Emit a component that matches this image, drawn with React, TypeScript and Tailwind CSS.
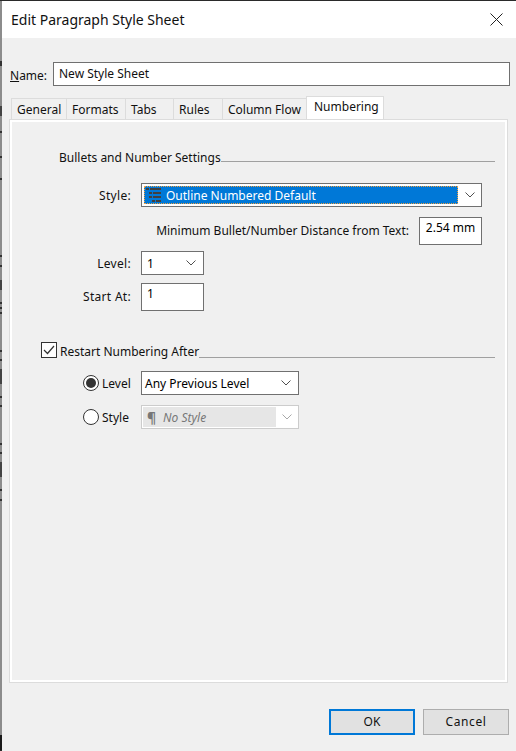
import React from 'react';

const Chevron = ({ color = '#505050' }: { color?: string }) => (
  <svg width="10" height="6" viewBox="0 0 10 6" fill="none" stroke={color} strokeWidth="1">
    <path d="M0.5 0.5 L5 5 L9.5 0.5" />
  </svg>
);

const Select = ({ width, children, disabled = false }: { width: string; children: React.ReactNode; disabled?: boolean }) => (
  <div className={`${width} h-6 flex items-center border ${disabled ? 'border-[#cccccc] bg-white text-[#6d6d6d]' : 'border-[#707070] bg-white text-black'}`}>
    {children}
  </div>
);

const tabs = [
  { label: 'General', width: 'w-[55px]' },
  { label: 'Formats', width: 'w-[59px]' },
  { label: 'Tabs', width: 'w-[48px]' },
  { label: 'Rules', width: 'w-[49px]' },
  { label: 'Column Flow', width: 'w-[84px]' },
];

// dark bits of the window behind, down the left edge: [height, colour]
const sliver: [number, string][] = [
  [60, '#8c8c8c'], [5, '#333333'], [40, '#8c8c8c'], [10, '#444444'], [15, '#8c8c8c'], [2, '#333333'], [23, '#8c8c8c'], [2, '#333333'],
  [20, '#8c8c8c'], [2, '#333333'], [75, '#8c8c8c'], [2, '#333333'], [8, '#8c8c8c'], [2, '#333333'], [13, '#8c8c8c'], [10, '#444444'],
  [12, '#8c8c8c'], [2, '#333333'], [3, '#8c8c8c'], [2, '#333333'], [3, '#8c8c8c'], [2, '#333333'], [36, '#8c8c8c'], [2, '#333333'],
  [7, '#8c8c8c'], [2, '#333333'], [8, '#8c8c8c'], [15, '#444444'], [12, '#8c8c8c'], [2, '#333333'], [7, '#8c8c8c'], [2, '#333333'],
  [36, '#8c8c8c'], [2, '#333333'], [7, '#8c8c8c'], [2, '#333333'], [8, '#8c8c8c'], [15, '#444444'], [12, '#8c8c8c'], [2, '#333333'],
  [8, '#8c8c8c'], [2, '#333333'], [234, '#8c8c8c'], [15, '#1a1a1a'],
];

export default function App() {
  return (
    <div className="w-[516px] h-[751px] bg-[#2a2a2a] pt-px flex text-[12px] text-[#111] overflow-hidden [font-family:'Noto_Sans',sans-serif]">
      <div className="w-[2px] h-full flex flex-col shrink-0">
        {sliver.map(([h, c], i) => (
          <div key={i} className="shrink-0" style={{ height: h, backgroundColor: c }} />
        ))}
      </div>

      <div className="w-[514px] h-[750px] bg-[#f0f0f0] flex flex-col">
        <div className="h-[37px] bg-white flex items-center justify-between shrink-0">
          <span className="ml-[9px] text-[14px] leading-none">Edit Paragraph Style Sheet</span>
          <svg className="mr-[13px]" width="13" height="13" viewBox="0 0 13 13" stroke="#222" strokeWidth="1" fill="none">
            <path d="M0.5 0.5 L12.5 12.5 M12.5 0.5 L0.5 12.5" />
          </svg>
        </div>

        <div className="flex items-center mt-6 ml-2 mr-[6px]">
          <span className="w-[43px] pt-1"><span className="underline">N</span>ame:</span>
          <div className="h-6 flex-1 border border-[#707070] bg-white px-[5px] flex items-center">New Style Sheet</div>
        </div>

        <div className="flex items-end ml-[9px] mt-[10px] h-[23px]">
          {tabs.map((t) => (
            <div key={t.label} className={`${t.width} h-[21px] border border-b-0 border-r-0 border-[#dcdcdc] flex items-center pl-[5px] pt-[2px]`}>
              {t.label}
            </div>
          ))}
          <div className="w-[78px] h-[23px] bg-white border border-b-0 border-[#dcdcdc] flex items-center pl-[7px] pb-[2px]">Numbering</div>
        </div>

        <div className="ml-[7px] w-[499px] h-[564px] border border-[#dcdcdc] shrink-0">
          <div className="h-full border-2 border-white flex flex-col pl-[47px]">
            <div className="flex mt-7 h-4 pr-[10px]">
              <span className="leading-4">Bullets and Number Settings</span>
              <div className="flex-1 h-px bg-[#a0a0a0] self-end mb-[4px]" />
            </div>

            <div className="flex items-center mt-[17px] -ml-[47px]">
              <span className="w-[119px] text-right mr-[10px] pt-[2px] tracking-[0.3px]">Style:</span>
              <Select width="w-[341px]">
                <div className="w-[314px] h-[18px] ml-[2px] flex items-center bg-[#0078d7] text-white border border-dotted border-[#f0a040]">
                  <svg className="ml-px mr-[5px]" width="15" height="14" viewBox="0 0 15 14" fill="#404040">
                    <path d="M0 0h3v2H0zM4 0h11v2H4zM3 4h3v2H3zM7 4h8v2H7zM3 8h3v2H3zM7 8h8v2H7zM6 12h3v2H6zM10 12h5v2H10z" />
                  </svg>
                  <span className="pt-[2px]">Outline Numbered Default</span>
                </div>
                <div className="flex-1 flex justify-center"><Chevron /></div>
              </Select>
            </div>

            <div className="flex items-center justify-end mt-[10px] mr-[23px]">
              <span className="mr-[10px]">Minimum Bullet/Number Distance from Text:</span>
              <div className="w-[63px] h-7 border border-[#707070] bg-white flex items-center justify-center pb-[6px] text-black">2.54 mm</div>
            </div>

            <div className="flex items-center mt-[6px] -ml-[47px]">
              <span className="w-[119px] text-right mr-[10px] pt-[2px] tracking-[0.3px]">Level:</span>
              <Select width="w-[63px]">
                <span className="ml-[5px] flex-1 pt-[2px]">1</span>
                <div className="mr-[7px] flex"><Chevron /></div>
              </Select>
            </div>

            <div className="flex items-center mt-2 -ml-[47px]">
              <span className="w-[119px] text-right mr-[10px] tracking-[0.3px]">Start At:</span>
              <div className="w-[63px] h-7 border border-[#707070] bg-white px-[5px] pb-[6px] flex items-center text-black">1</div>
            </div>

            <div className="flex mt-[31px] -ml-[18px] pr-[10px] h-4">
              <div className="w-4 h-4 border border-[#333] bg-white flex items-center justify-center shrink-0">
                <svg width="12" height="10" viewBox="0 0 12 10" fill="none" stroke="#333" strokeWidth="1.2">
                  <path d="M1 5 L4.5 8.5 L11 1" />
                </svg>
              </div>
              <span className="ml-[3px] leading-4 pt-[2px]">Restart Numbering After</span>
              <div className="flex-1 h-px bg-[#a0a0a0] self-end" />
            </div>

            <div className="flex items-center mt-[13px] ml-[24px]">
              <div className="w-4 h-4 rounded-full border border-[#333] bg-white flex items-center justify-center shrink-0">
                <div className="w-[10px] h-[10px] rounded-full bg-[#333]" />
              </div>
              <span className="w-[39px] ml-[3px] pt-[2px]">Level</span>
              <Select width="w-[158px]">
                <span className="ml-[3px] flex-1 pt-[2px]">Any Previous Level</span>
                <div className="mr-[7px] flex"><Chevron /></div>
              </Select>
            </div>

            <div className="flex items-center mt-[10px] ml-[24px]">
              <div className="w-4 h-4 rounded-full border border-[#333] bg-white shrink-0" />
              <span className="w-[39px] ml-[3px] pt-[2px]">Style</span>
              <Select width="w-[158px]" disabled>
                <div className="w-[133px] h-5 ml-px bg-[#e6e6e6] flex items-center">
                  <span className="ml-[4px] mr-[7px] text-[14px] text-[#777] font-bold">¶</span>
                  <span className="italic text-[#777] pt-[2px]">No Style</span>
                </div>
                <div className="flex-1 flex justify-center"><Chevron color="#a8a8a8" /></div>
              </Select>
            </div>
          </div>
        </div>

        <div className="flex justify-end gap-2 mt-[26px] mr-[7px]">
          <div className="w-[86px] h-[26px] bg-[#e1e1e1] border-2 border-[#0078d7] flex items-center justify-center">OK</div>
          <div className="w-[86px] h-[26px] bg-[#e1e1e1] border border-[#adadad] flex items-center justify-center tracking-[0.6px]">Cancel</div>
        </div>
      </div>
    </div>
  );
}
